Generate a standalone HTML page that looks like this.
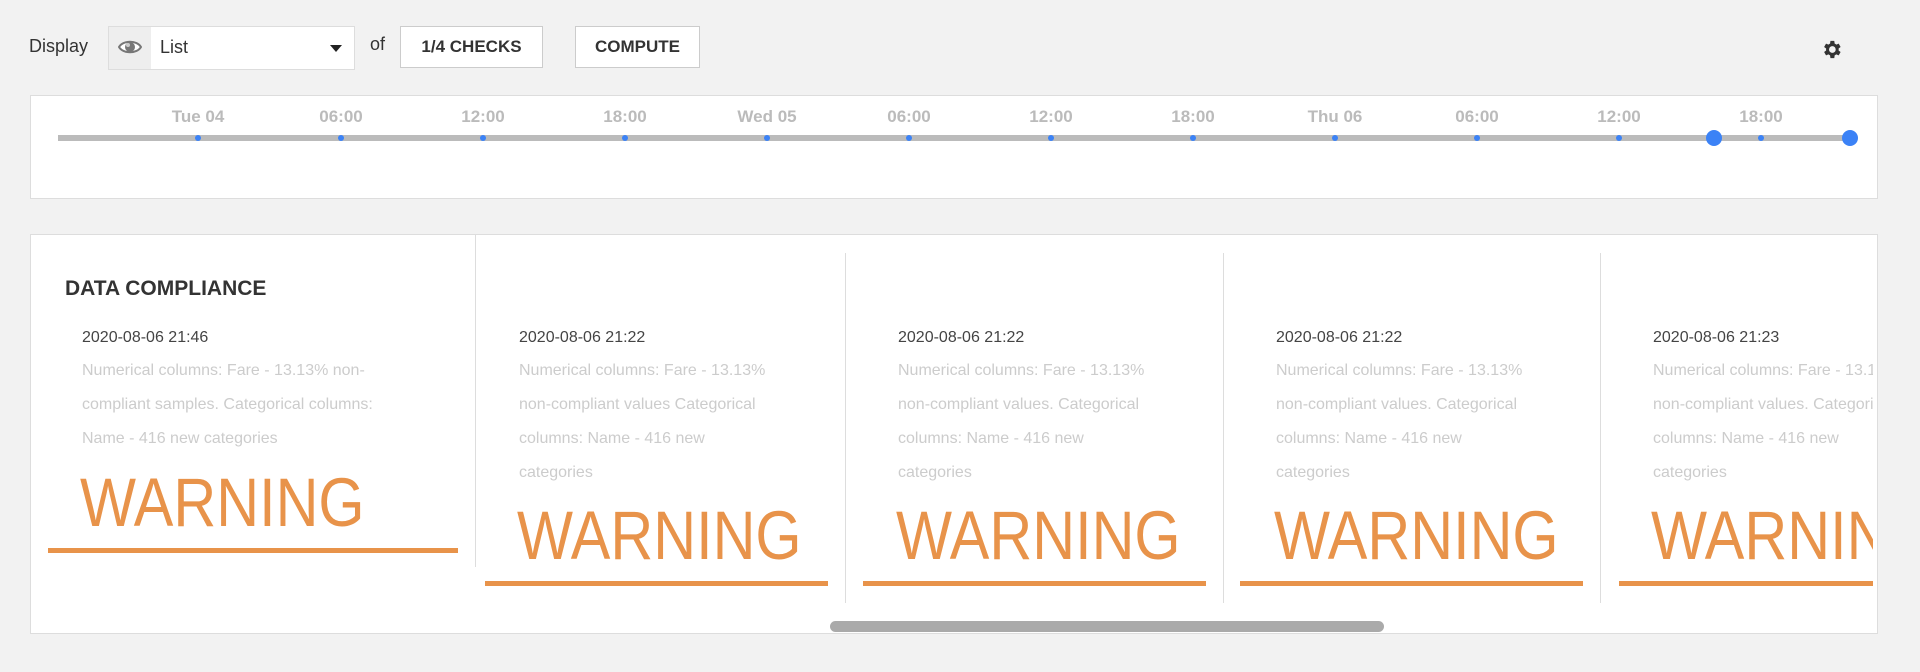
<!DOCTYPE html>
<html><head><meta charset="utf-8"><style>
body{margin:0;width:1920px;height:672px;background:#f2f2f2;font-family:"Liberation Sans",sans-serif;position:relative;overflow:hidden;color:#333}
.a{position:absolute}
.btn{position:absolute;top:26px;height:42px;border:1px solid #ccc;background:#fff;box-sizing:border-box;font-size:17px;font-weight:bold;line-height:40px;text-align:center;color:#333}
.lbl{position:absolute;top:107px;width:100px;margin-left:-50px;text-align:center;font-size:17px;font-weight:bold;color:#bbb}
.tk{position:absolute;top:135px;width:6px;height:6px;margin-left:-3px;border-radius:50%;background:#3b82f6}
.date{position:absolute;font-size:16px;color:#444}
.desc{position:absolute;font-size:16px;line-height:34px;color:#ccc;white-space:nowrap}
.warn{position:absolute;font-size:69px;color:#e8934a;white-space:nowrap;transform:scaleX(.86);transform-origin:left}
.ul{position:absolute;height:5px;background:#e8934a}
.dv{position:absolute;width:1px;background:#ddd}
</style></head><body>
<div class="a" style="left:29px;top:36px;font-size:18px">Display</div>
<div class="a" style="left:108px;top:26px;width:247px;height:44px;border:1px solid #ddd;box-sizing:border-box;background:#fff"></div>
<div class="a" style="left:109px;top:27px;width:42px;height:42px;background:#eee"></div>
<svg class="a" style="left:118px;top:38px" width="24" height="18" viewBox="0 0 24 18"><path d="M1 9C5 2 19 2 23 9C19 16 5 16 1 9Z" fill="#fff" stroke="#777" stroke-width="2"/><circle cx="12" cy="9" r="5" fill="#777"/><circle cx="10" cy="7" r="2" fill="#ccc"/></svg>
<div class="a" style="left:160px;top:37px;font-size:18px">List</div>
<div class="a" style="left:330px;top:45px;border-left:6px solid transparent;border-right:6px solid transparent;border-top:7px solid #222"></div>
<div class="a" style="left:370px;top:34px;font-size:18px">of</div>
<div class="btn" style="left:400px;width:143px">1/4 CHECKS</div>
<div class="btn" style="left:575px;width:125px">COMPUTE</div>
<svg class="a" style="left:1820px;top:38px" width="23" height="23" viewBox="0 0 24 24"><path fill="#333" d="M19.4 13a7.5 7.5 0 000-2l2.1-1.6-2-3.5-2.5 1a7.3 7.3 0 00-1.7-1L14.9 3h-4l-.4 2.9a7.3 7.3 0 00-1.7 1l-2.5-1-2 3.5L6.4 11a7.5 7.5 0 000 2l-2.1 1.6 2 3.5 2.5-1a7.3 7.3 0 001.7 1l.4 2.9h4l.4-2.9a7.3 7.3 0 001.7-1l2.5 1 2-3.5zM12.9 15.5a3.5 3.5 0 110-7 3.5 3.5 0 010 7z"/></svg>

<div class="a" style="left:30px;top:95px;width:1848px;height:104px;background:#fff;border:1px solid #ddd;box-sizing:border-box"></div>
<div class="a" style="left:58px;top:135px;width:1792px;height:6px;background:#bbb"></div>
<div class="lbl" style="left:198px">Tue 04</div><div class="lbl" style="left:341px">06:00</div><div class="lbl" style="left:483px">12:00</div><div class="lbl" style="left:625px">18:00</div><div class="lbl" style="left:767px">Wed 05</div><div class="lbl" style="left:909px">06:00</div><div class="lbl" style="left:1051px">12:00</div><div class="lbl" style="left:1193px">18:00</div><div class="lbl" style="left:1335px">Thu 06</div><div class="lbl" style="left:1477px">06:00</div><div class="lbl" style="left:1619px">12:00</div><div class="lbl" style="left:1761px">18:00</div>
<div class="tk" style="left:198px"></div><div class="tk" style="left:341px"></div><div class="tk" style="left:483px"></div><div class="tk" style="left:625px"></div><div class="tk" style="left:767px"></div><div class="tk" style="left:909px"></div><div class="tk" style="left:1051px"></div><div class="tk" style="left:1193px"></div><div class="tk" style="left:1335px"></div><div class="tk" style="left:1477px"></div><div class="tk" style="left:1619px"></div><div class="tk" style="left:1761px"></div>
<div class="a" style="left:1706px;top:130px;width:16px;height:16px;border-radius:50%;background:#3b82f6"></div>
<div class="a" style="left:1842px;top:130px;width:16px;height:16px;border-radius:50%;background:#3b82f6"></div>

<div class="a" style="left:30px;top:234px;width:1848px;height:400px;background:#fff;border:1px solid #ddd;box-sizing:border-box"></div>
<div class="a" style="left:31px;top:235px;width:1842px;height:398px;overflow:hidden">
<div class="a" style="left:34px;top:42px;font-size:21px;font-weight:bold;color:#333">DATA COMPLIANCE</div>
<div class="date" style="left:51px;top:94px">2020-08-06 21:46</div>
<div class="desc" style="left:51px;top:119px">Numerical columns: Fare - 13.13% non-<br>compliant samples. Categorical columns:<br>Name - 416 new categories</div>
<div class="warn" style="left:49px;top:228px">WARNING</div>
<div class="ul" style="left:17px;top:313px;width:410px"></div>
<div class="dv" style="left:444px;top:0;height:332px"></div>

<div class="date" style="left:488px;top:94px">2020-08-06 21:22</div>
<div class="desc" style="left:488px;top:119px">Numerical columns: Fare - 13.13%<br>non-compliant values Categorical<br>columns: Name - 416 new<br>categories</div>
<div class="warn" style="left:486px;top:261px">WARNING</div>
<div class="ul" style="left:454px;top:346px;width:343px"></div>
<div class="dv" style="left:814px;top:18px;height:350px"></div>

<div class="date" style="left:867px;top:94px">2020-08-06 21:22</div>
<div class="desc" style="left:867px;top:119px">Numerical columns: Fare - 13.13%<br>non-compliant values. Categorical<br>columns: Name - 416 new<br>categories</div>
<div class="warn" style="left:865px;top:261px">WARNING</div>
<div class="ul" style="left:832px;top:346px;width:343px"></div>
<div class="dv" style="left:1192px;top:18px;height:350px"></div>

<div class="date" style="left:1245px;top:94px">2020-08-06 21:22</div>
<div class="desc" style="left:1245px;top:119px">Numerical columns: Fare - 13.13%<br>non-compliant values. Categorical<br>columns: Name - 416 new<br>categories</div>
<div class="warn" style="left:1243px;top:261px">WARNING</div>
<div class="ul" style="left:1209px;top:346px;width:343px"></div>
<div class="dv" style="left:1569px;top:18px;height:350px"></div>

<div class="date" style="left:1622px;top:94px">2020-08-06 21:23</div>
<div class="desc" style="left:1622px;top:119px">Numerical columns: Fare - 13.13%<br>non-compliant values. Categorical<br>columns: Name - 416 new<br>categories</div>
<div class="warn" style="left:1620px;top:261px">WARNING</div>
<div class="ul" style="left:1588px;top:346px;width:343px"></div>
</div>
<div class="a" style="left:830px;top:621px;width:554px;height:11px;border-radius:6px;background:#aaa"></div>
</body></html>
